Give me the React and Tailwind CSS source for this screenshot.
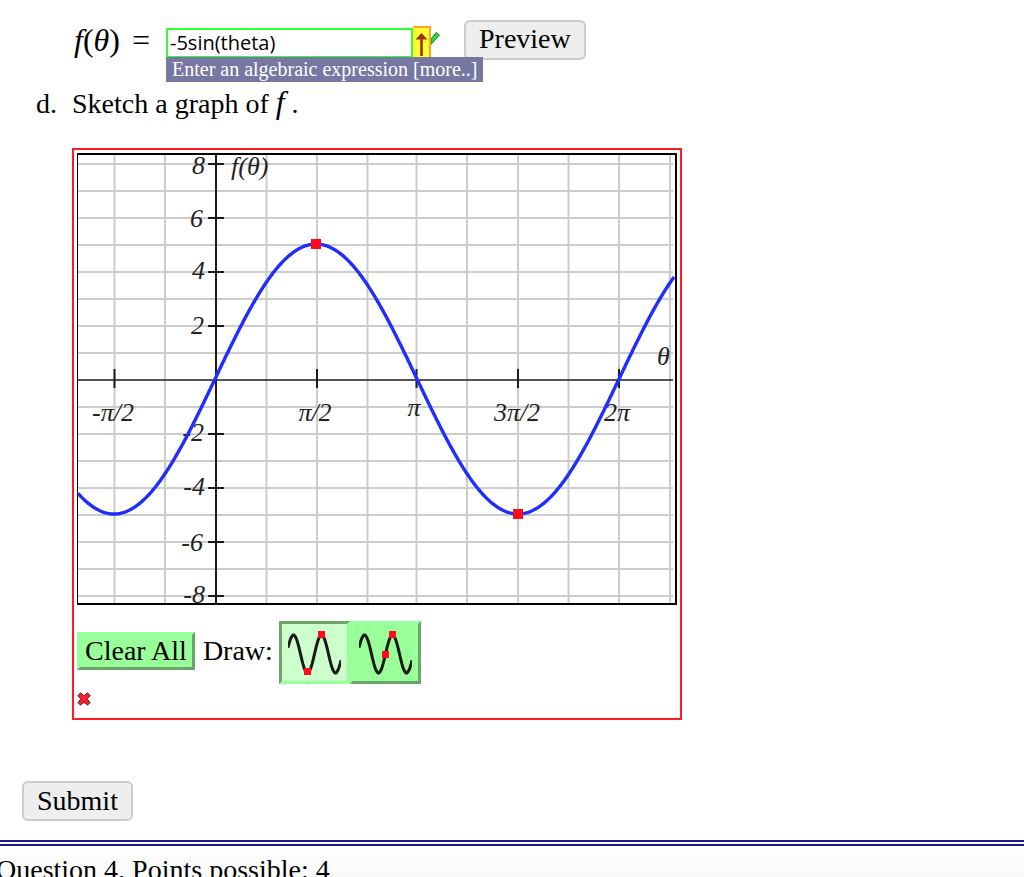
import { useState } from 'react';

const GRID_X = [36.5, 87, 138, 188.5, 239, 289.5, 338.5, 389, 440, 490.5, 541, 592];
const GRID_Y = [9, 36, 63, 90, 117, 144, 171, 198, 252, 279, 306, 333, 360, 387, 414, 441];
const TICKS_X = [36.5, 239, 338.5, 440, 541];

const Y_LABELS = [
  { text: '8', x: 127, y: 19 },
  { text: '6', x: 125, y: 72 },
  { text: '4', x: 127, y: 124 },
  { text: '2', x: 126, y: 179 },
  { text: '-2', x: 126, y: 286 },
  { text: '-4', x: 127, y: 340 },
  { text: '-6', x: 125, y: 396 },
  { text: '-8', x: 127, y: 448 },
];

const X_LABELS = [
  { text: '-π/2', x: 35, y: 266 },
  { text: 'π/2', x: 237, y: 266 },
  { text: 'π', x: 336, y: 261 },
  { text: '3π/2', x: 439, y: 266 },
  { text: '2π', x: 539, y: 266 },
];

// cosine through two neighbouring extrema
function cosinePath(peakX, half, midY, amp, from, to) {
  const pts = [];
  for (let x = from; x <= to; x += 1) {
    const y = midY - amp * Math.cos(((x - peakX) / half) * Math.PI);
    pts.push(`${x},${y.toFixed(2)}`);
  }
  return 'M' + pts.join('L');
}

function Graph({ points }) {
  return (
    <div className="border-2 border-l border-black">
      <svg viewBox="0 0 597 448" className="block w-[597px] max-w-full overflow-visible" role="img" aria-label="Graph of f">
        <g stroke="#cccccc" strokeWidth="2">
          {GRID_X.map((x) => <line key={x} x1={x} y1="0" x2={x} y2="448" />)}
          {GRID_Y.map((y) => <line key={y} x1="0" y1={y} x2="595" y2={y} />)}
        </g>
        <g stroke="#1c1c1c" strokeWidth="2">
          <line x1="0" y1="225" x2="595" y2="225" strokeWidth="1.6" />
          <line x1="138" y1="0" x2="138" y2="448" />
          {TICKS_X.map((x) => <line key={x} x1={x} y1="214" x2={x} y2="233" />)}
          {Y_LABELS.map((l, i) => {
            const y = i < 4 ? 9 + i * 54 : 279 + (i - 4) * 54;
            return <line key={l.text} x1="130" y1={y} x2="146" y2={y} />;
          })}
        </g>
        <g fill="#222222" fontSize="26" fontStyle="italic" fontFamily="Liberation Serif, serif">
          {Y_LABELS.map((l) => <text key={l.text} x={l.x} y={l.y} textAnchor="end">{l.text}</text>)}
          {X_LABELS.map((l) => <text key={l.text} x={l.x} y={l.y} textAnchor="middle">{l.text}</text>)}
          <text x="153" y="20">f(θ)</text>
          <text x="579" y="210">θ</text>
        </g>
        {points && (
          <>
            <path d={cosinePath(238, 202, 224, 135, 0, 596)} fill="none" stroke="#1f2dff" strokeWidth="3.4" />
            <rect x="233" y="84" width="10" height="10" fill="#ff0a1c" />
            <rect x="435" y="354" width="10" height="10" fill="#ff0a1c" />
          </>
        )}
      </svg>
    </div>
  );
}

function ToolButton({ label, active, dot, onClick }) {
  return (
    <button
      type="button"
      aria-label={label}
      aria-pressed={active}
      onClick={onClick}
      className={
        active
          ? 'border-[3px] border-t-[#6aa56a] border-l-[#6aa56a] border-r-[#99ff99] border-b-[#99ff99] bg-[#ccffcc] px-1.5 py-1.5'
          : 'border-[3px] border-t-[#99ff99] border-l-[#99ff99] border-r-[#6aa56a] border-b-[#6aa56a] bg-[#99ff99] px-1.5 py-1.5'
      }
    >
      <svg width="53" height="45" viewBox="0 0 53 45" className="block">
        <path d={cosinePath(33.5, 14, 24, 19, 0, 53)} fill="none" stroke="#1a1a1a" strokeWidth="3" />
        <rect x="30" y="1" width="7" height="7" fill="#ff0a1c" />
        <rect x={dot.x} y={dot.y} width="7" height="7" fill="#ff0a1c" />
      </svg>
    </button>
  );
}

export default function App() {
  const [expr, setExpr] = useState('-5sin(theta)');
  const [tool, setTool] = useState('extrema');
  const [drawn, setDrawn] = useState(true);

  return (
    <div className="h-screen overflow-hidden bg-white font-['Liberation_Serif',serif] text-[28px] leading-8 text-black">
      <main className="pt-5">

        {/* Formula answer */}
        <div className="flex h-10 pl-[74px]">
          <label htmlFor="expr" className="flex w-[92px] shrink-0 gap-3 text-[32px] leading-10">
            <i>f<span className="not-italic">(</span>θ<span className="not-italic">)</span></i>
            <span>=</span>
          </label>
          <div className="relative mb-0.5 flex h-8 self-end items-end">
            <input
              id="expr"
              type="text"
              value={expr}
              onChange={(e) => setExpr(e.target.value)}
              className="h-[30px] w-[247px] border-2 border-[#33ff33] bg-white px-0.5 font-['Open_Sans',sans-serif] text-[20px] outline-none"
            />
            <button type="button" aria-label="Show entry tips" className="h-8 w-[18px] border-t-2 border-r-2 border-[#ffa526] bg-[#ffff33]">
              <svg width="16" height="30" viewBox="0 0 16 30" className="block">
                <path d="M8.5 28V8" stroke="#993300" strokeWidth="2.6" />
                <path d="M2.5 11.5L8.5 5L14.5 11.5Z" fill="#993300" />
              </svg>
            </button>
            <svg width="10" height="32" viewBox="0 0 10 32" className="block" aria-label="Correct">
              <path d="M0 13L5 6.5L8.5 9L0 18.5Z" fill="#22dd33" stroke="#3d7a44" strokeWidth="1" />
            </svg>
            <div className="absolute top-full left-0 z-10 -mt-px bg-[#7777a3] px-1.5 text-[20px] leading-[25px] whitespace-nowrap text-white">
              Enter an algebraic expression [more..]
            </div>
          </div>
          <button type="button" className="ml-[23px] h-10 rounded-md border-2 border-[#cccccc] bg-[#eeeeee] px-[13px] pb-0.5">
            Preview
          </button>
        </div>

        {/* Part d */}
        <p className="mt-[26px] flex items-baseline pl-9">
          <span className="w-9">d.</span>
          <span>Sketch a graph of <i className="text-[32px] leading-none">f</i> .</span>
        </p>

        <section className="mt-7 ml-[72px] w-fit max-w-full border-2 border-[#ff1a24] p-[3px]">
          <Graph points={drawn} />
          <div className="mt-4 flex items-center">
            <button
              type="button"
              onClick={() => setDrawn(false)}
              className="mb-1 h-[38px] border-[3px] border-t-[#99ff99] border-l-[#99ff99] border-r-[#6aa56a] border-b-[#6aa56a] bg-[#99ff99] px-[5px] leading-[30px]"
            >
              Clear All
            </button>
            <span className="mr-1.5 mb-1 ml-2">Draw:</span>
            <ToolButton label="Draw from two extrema" active={tool === 'extrema'} dot={{ x: 16, y: 38 }} onClick={() => setTool('extrema')} />
            <ToolButton label="Draw from midline and extremum" active={tool === 'midline'} dot={{ x: 23, y: 21 }} onClick={() => setTool('midline')} />
          </div>
          <svg width="14" height="14" viewBox="0 0 14 14" className="mt-2 mb-[9px] block" aria-label="Incorrect">
            <path
              d="M3.5 0.8L7 3.8L10.5 0.8L13.2 3.5L10.2 7L13.2 10.5L10.5 13.2L7 10.2L3.5 13.2L0.8 10.5L3.8 7L0.8 3.5Z"
              fill="#f5202c"
              stroke="#6a2a2e"
              strokeWidth="1"
              strokeLinejoin="round"
            />
          </svg>
        </section>

        <button type="submit" className="mt-[61px] ml-[22px] block h-10 rounded-md border-2 border-[#cccccc] bg-[#eeeeee] px-[13px]">
          Submit
        </button>
      </main>

      {/* Next question */}
      <h2 className="mt-[19px] border-t-6 border-double border-[#1a1a80] bg-linear-to-b from-white to-[#f8f8f8] pt-2">
        <span className="-ml-1">Question 4. Points possible: 4</span>
      </h2>
    </div>
  );
}
